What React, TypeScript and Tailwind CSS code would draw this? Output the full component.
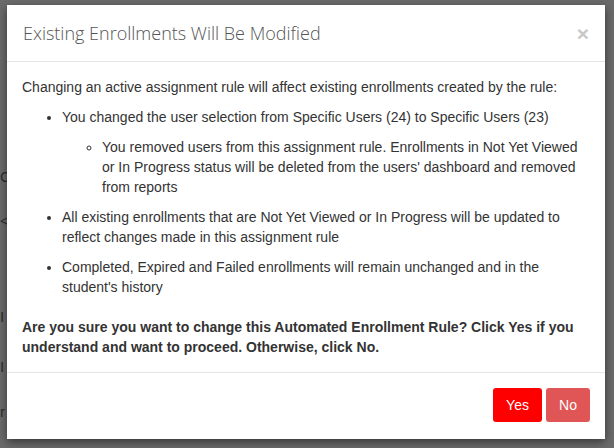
import React from 'react';

const bodyFont = { fontFamily: '"Liberation Sans", Arial, sans-serif' };

function Backdrop() {
  // dimmed page content peeking out to the left of the dialog
  const bits = [
    { ch: 'C', top: 168 },
    { ch: '<', top: 212 },
    { ch: 'I', top: 308 },
    { ch: 'I', top: 358 },
    { ch: 'r', top: 403 },
  ];
  return (
    <>
      {bits.map((b, i) => (
        <span
          key={i}
          className="absolute left-0 text-[15px] leading-[18px] text-[#2e2e2e]"
          style={{ top: b.top, ...bodyFont }}
        >
          {b.ch}
        </span>
      ))}
    </>
  );
}

export default function App() {
  return (
    <div className="relative h-[448px] w-[614px] overflow-hidden bg-[#6b6b6b]">
      <Backdrop />
      <div className="relative pl-[7px] pt-[5px]">
        <div className="w-[598px] bg-white shadow-[0_3px_9px_rgba(0,0,0,0.5)]">
          <div className="flex h-[57px] items-center justify-between border-b border-[#e5e5e5] pl-[16px] pr-[16px]">
            <h4
              className="text-[18px] font-light leading-[26px] text-[#555]"
              style={{ fontFamily: '"Open Sans", sans-serif' }}
            >
              Existing Enrollments Will Be Modified
            </h4>
            <button
              className="text-[21px] font-bold leading-none text-[#c8c8c8]"
              style={bodyFont}
            >
              ×
            </button>
          </div>

          <div className="px-[15px] py-[15px] text-[14px] leading-[20px] text-[#333]" style={bodyFont}>
            <p className="mb-[10px]">
              Changing an active assignment rule will affect existing enrollments created by the rule:
            </p>
            <ul className="mb-[20px] list-disc pl-[40px]">
              <li className="mb-[10px]">
                You changed the user selection from Specific Users (24) to Specific Users (23)
                <ul className="mt-[10px] list-[circle] pl-[40px]">
                  <li>
                    You removed users from this assignment rule. Enrollments in Not Yet Viewed or In
                    Progress status will be deleted from the users' dashboard and removed from reports
                  </li>
                </ul>
              </li>
              <li className="mb-[10px]">
                All existing enrollments that are Not Yet Viewed or In Progress will be updated to
                reflect changes made in this assignment rule
              </li>
              <li>
                Completed, Expired and Failed enrollments will remain unchanged and in the student's
                history
              </li>
            </ul>
            <p className="font-bold">
              Are you sure you want to change this Automated Enrollment Rule? Click Yes if you
              understand and want to proceed. Otherwise, click No.
            </p>
          </div>

          <div className="flex justify-end gap-[4px] border-t border-[#e5e5e5] px-[15px] pb-[17px] pt-[15px]">
            <button
              className="h-[34px] w-[49px] rounded-[3px] bg-[#ff0000] text-[14px] text-white"
              style={bodyFont}
            >
              Yes
            </button>
            <button
              className="h-[34px] w-[44px] rounded-[3px] bg-[#e05555] text-[14px] text-white"
              style={bodyFont}
            >
              No
            </button>
          </div>
        </div>
      </div>
    </div>
  );
}
